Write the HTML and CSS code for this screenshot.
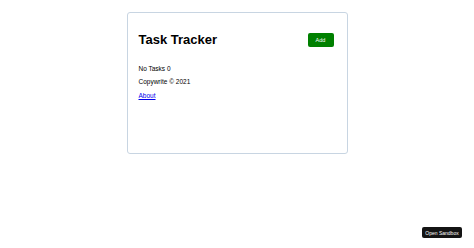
FILE: index.html
```html
<!DOCTYPE html>
<html lang="en">
<head>
<meta charset="utf-8">
<title>Task Tracker</title>
<link rel="stylesheet" href="styles.css">
</head>
<body>
<div class="container">
  <header class="header">
    <h1 class="title">Task Tracker</h1>
    <button class="btn">Add</button>
  </header>
  <p class="line first">No Tasks 0</p>
  <footer class="footer">
    <p class="line">Copywrite &copy; 2021</p>
    <a class="link" href="#">About</a>
  </footer>
</div>
<button class="sandbox">Open Sandbox</button>
</body>
</html>
```
FILE: styles.css
```css
html, body {
  margin: 0;
  padding: 0;
  background: #fff;
}
body {
  font-family: "Liberation Sans", Arial, sans-serif;
  color: #000;
}
.container {
  box-sizing: border-box;
  width: 221px;
  height: 142px;
  margin: 12px auto 0;
  border: 1px solid #c8d5e2;
  border-radius: 3px;
  padding: 0 13px 0 11px;
}
.header {
  display: flex;
  align-items: center;
  justify-content: space-between;
  height: 20px;
  margin-top: 17px;
}
.title {
  margin: 0;
  font-size: 13px;
  font-weight: bold;
  line-height: 20px;
}
.btn {
  width: 26px;
  height: 14px;
  padding: 0;
  border: none;
  border-radius: 2px;
  background: #008000;
  color: #fff;
  font-family: "Liberation Sans", Arial, sans-serif;
  font-size: 5.5px;
}
.line {
  margin: 0;
  font-size: 6.5px;
  line-height: 13px;
}
.first {
  margin-top: 12px;
}
.footer {
  display: flex;
  flex-direction: column;
  align-items: flex-start;
}
.link {
  margin-top: 2px;
  font-size: 6.5px;
  line-height: 12px;
  color: #0000ee;
}
.sandbox {
  position: fixed;
  right: 12px;
  bottom: 10px;
  width: 40px;
  height: 11px;
  padding: 0;
  border: none;
  border-radius: 2px;
  background: #141414;
  color: #fff;
  font-family: "Liberation Sans", Arial, sans-serif;
  font-size: 5px;
}
```
